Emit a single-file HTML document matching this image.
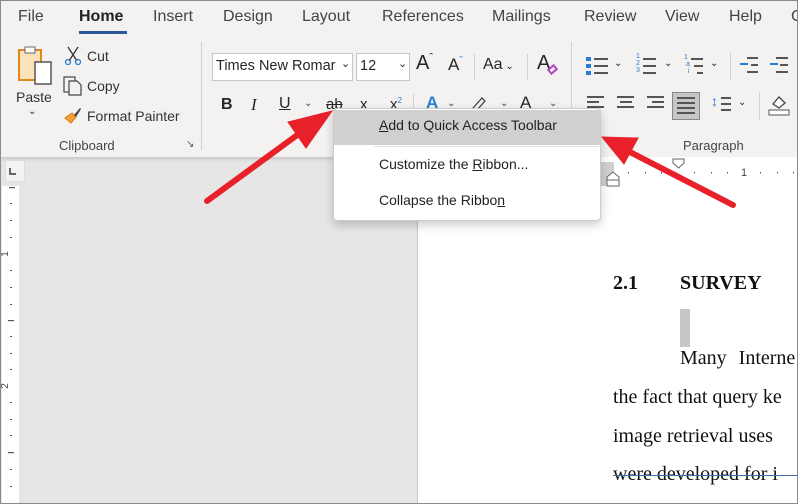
<!DOCTYPE html>
<html><head><style>
*{margin:0;padding:0;box-sizing:border-box}
body{width:798px;height:504px;overflow:hidden;position:relative;background:#e6e6e6;font-family:"Segoe UI","Liberation Sans",sans-serif;color:#262626}
.a{position:absolute;white-space:nowrap}
.tab{position:absolute;top:8px;font-size:16px;color:#444}
.sm{font-size:14px;color:#333}
.box{position:absolute;background:#fff;border:1px solid #c8c6c4}
.ln{position:absolute;background:#555;height:2px}
.bl{position:absolute;background:#2b7cd3}
.doc{font-family:"Liberation Serif",serif;font-size:20px;color:#111}
.ch{position:absolute;font-size:10px;color:#444}
</style></head><body>
<div class="a" style="left:0;top:0;width:798px;height:157px;background:#f3f2f1;box-shadow:0 2px 4px rgba(0,0,0,.15)"></div>
<div class="tab" style="left:18px">File</div>
<div class="tab" style="left:79px;color:#222;font-weight:bold">Home</div>
<div class="a" style="left:79px;top:31px;width:48px;height:3px;background:#2b579a"></div>
<div class="tab" style="left:153px">Insert</div>
<div class="tab" style="left:223px">Design</div>
<div class="tab" style="left:302px">Layout</div>
<div class="tab" style="left:382px">References</div>
<div class="tab" style="left:492px">Mailings</div>
<div class="tab" style="left:584px">Review</div>
<div class="tab" style="left:665px">View</div>
<div class="tab" style="left:729px">Help</div>
<div class="tab" style="left:791px">C</div>
<!-- clipboard -->
<svg class="a" style="left:16px;top:45px" width="40" height="42"><rect x="3" y="5" width="22" height="30" fill="#fbe2b8" stroke="#e08a1e" stroke-width="2"/><rect x="9" y="2" width="10" height="6" fill="#fff" stroke="#666"/><rect x="19" y="17" width="16" height="22" fill="#fff" stroke="#555" stroke-width="1.5"/></svg>
<div class="a sm" style="left:16px;top:89px">Paste</div>
<div class="a" style="left:28px;top:106px;font-size:10px">⌄</div>
<svg class="a" style="left:64px;top:46px" width="18" height="20"><path d="M4 1L13 15M14 1L5 15" stroke="#333" stroke-width="1.3" fill="none"/><circle cx="4" cy="16" r="2.5" fill="none" stroke="#2b7cd3" stroke-width="1.3"/><circle cx="14" cy="16" r="2.5" fill="none" stroke="#2b7cd3" stroke-width="1.3"/></svg>
<div class="a sm" style="left:87px;top:48px">Cut</div>
<svg class="a" style="left:63px;top:76px" width="20" height="20"><rect x="1" y="1" width="11" height="15" fill="none" stroke="#444" stroke-width="1.2"/><path d="M6 5h8l4 4v10H6z" fill="#f3f2f1" stroke="#444" stroke-width="1.2"/></svg>
<div class="a sm" style="left:87px;top:78px">Copy</div>
<svg class="a" style="left:63px;top:106px" width="20" height="18"><path d="M2 12l7-5 4 4-5 6z" fill="#f4a13a" stroke="#e07b12"/><path d="M11 9l6-7 1 1-5 8z" fill="#444"/></svg>
<div class="a sm" style="left:87px;top:108px">Format Painter</div>
<div class="a" style="left:59px;top:138px;font-size:13px;color:#444">Clipboard</div>
<div class="a" style="left:186px;top:139px;font-size:10px;color:#555">↘</div>
<div class="a" style="left:201px;top:42px;width:1px;height:108px;background:#d2d0ce"></div>
<!-- font -->
<div class="box" style="left:212px;top:53px;width:141px;height:28px"></div>
<div class="a" style="left:216px;top:58px;font-size:14.5px">Times New Romar</div>
<div class="a" style="left:341px;top:57px;font-size:11px">⌄</div>
<div class="box" style="left:356px;top:53px;width:54px;height:28px"></div>
<div class="a" style="left:360px;top:58px;font-size:14.5px">12</div>
<div class="a" style="left:398px;top:57px;font-size:11px">⌄</div>
<div class="a" style="left:416px;top:52px;font-size:20px">A<span style="font-size:11px;vertical-align:top">ˆ</span></div>
<div class="a" style="left:448px;top:55px;font-size:17px">A<span style="font-size:11px;color:#2b7cd3;vertical-align:top">ˇ</span></div>
<div class="a" style="left:474px;top:54px;width:1px;height:26px;background:#d2d0ce"></div>
<div class="a" style="left:483px;top:56px;font-size:16px">Aa<span style="font-size:10px"> ⌄</span></div>
<div class="a" style="left:527px;top:54px;width:1px;height:26px;background:#d2d0ce"></div>
<div class="a" style="left:537px;top:52px;font-size:20px">A</div>
<div class="a" style="left:548px;top:66px;width:9px;height:7px;border:2px solid #b146c2;transform:rotate(-40deg)"></div>
<div class="a" style="left:221px;top:96px;font-size:16px;font-weight:bold">B</div>
<div class="a" style="left:251px;top:95px;font-size:17px;font-style:italic;font-family:'Liberation Serif',serif">I</div>
<div class="a" style="left:279px;top:95px;font-size:16px;text-decoration:underline">U</div>
<div class="ch" style="left:304px;top:98px">⌄</div>
<div class="a" style="left:326px;top:96px;font-size:15px;text-decoration:line-through">ab</div>
<div class="a" style="left:360px;top:96px;font-size:15px">x</div>
<div class="a" style="left:390px;top:96px;font-size:15px">x<sup style="font-size:8px;color:#2b7cd3">2</sup></div>
<div class="a" style="left:413px;top:94px;width:1px;height:22px;background:#d2d0ce"></div>
<div class="a" style="left:426px;top:93px;font-size:17px;color:#2b7cd3;font-weight:bold">A</div>
<div class="ch" style="left:447px;top:98px">⌄</div>
<svg class="a" style="left:470px;top:94px" width="18" height="18"><path d="M3 14l9-10 3 3-9 10z" fill="none" stroke="#444" stroke-width="1.3"/></svg>
<div class="ch" style="left:500px;top:98px">⌄</div>
<div class="a" style="left:520px;top:93px;font-size:17px">A</div>
<div class="ch" style="left:549px;top:98px">⌄</div>
<!-- paragraph -->
<div class="a" style="left:571px;top:42px;width:1px;height:108px;background:#d2d0ce"></div>
<div class="bl" style="left:586px;top:57px;width:5px;height:4px"></div><div class="ln" style="left:594px;top:58px;width:14px;height:1.5px"></div>
<div class="bl" style="left:586px;top:64px;width:5px;height:4px"></div><div class="ln" style="left:594px;top:65px;width:14px;height:1.5px"></div>
<div class="bl" style="left:586px;top:71px;width:5px;height:4px"></div><div class="ln" style="left:594px;top:72px;width:14px;height:1.5px"></div>
<div class="a" style="left:614px;top:58px;font-size:10px">⌄</div>
<div class="a" style="left:636px;top:53px;font-size:7px;color:#2b7cd3;line-height:7px">1<br>2<br>3</div><div class="ln" style="left:643px;top:58px;width:13px;height:1.5px"></div><div class="ln" style="left:643px;top:65px;width:13px;height:1.5px"></div><div class="ln" style="left:643px;top:72px;width:13px;height:1.5px"></div>
<div class="a" style="left:664px;top:58px;font-size:10px">⌄</div>
<div class="a" style="left:684px;top:54px;font-size:7px;color:#2b7cd3;line-height:7px">1<br>&nbsp;a<br>&nbsp;&nbsp;i</div><div class="ln" style="left:691px;top:58px;width:12px;height:1.5px"></div><div class="ln" style="left:694px;top:65px;width:9px;height:1.5px"></div><div class="ln" style="left:697px;top:72px;width:6px;height:1.5px"></div>
<div class="a" style="left:710px;top:58px;font-size:10px">⌄</div>
<div class="a" style="left:730px;top:52px;width:1px;height:28px;background:#d2d0ce"></div>
<div class="bl" style="left:740px;top:63px;width:8px;height:1.5px"></div><div class="ln" style="left:747px;top:57px;width:11px;height:1.5px"></div><div class="ln" style="left:751px;top:64px;width:7px;height:1.5px"></div><div class="ln" style="left:747px;top:71px;width:11px;height:1.5px"></div>
<div class="bl" style="left:770px;top:63px;width:8px;height:1.5px"></div><div class="ln" style="left:776px;top:57px;width:12px;height:1.5px"></div><div class="ln" style="left:780px;top:64px;width:8px;height:1.5px"></div><div class="ln" style="left:776px;top:71px;width:12px;height:1.5px"></div>
<div class="ln" style="left:587px;top:96px;width:17px;height:1.5px"></div><div class="ln" style="left:587px;top:101px;width:12px;height:1.5px"></div><div class="ln" style="left:587px;top:106px;width:17px;height:1.5px"></div>
<div class="ln" style="left:617px;top:96px;width:17px;height:1.5px"></div><div class="ln" style="left:620px;top:101px;width:12px;height:1.5px"></div><div class="ln" style="left:617px;top:106px;width:17px;height:1.5px"></div>
<div class="ln" style="left:647px;top:96px;width:17px;height:1.5px"></div><div class="ln" style="left:652px;top:101px;width:12px;height:1.5px"></div><div class="ln" style="left:647px;top:106px;width:17px;height:1.5px"></div>
<div class="a" style="left:672px;top:92px;width:28px;height:28px;background:#c8c6c4;border:1px solid #8a8886"></div>
<div class="ln" style="left:677px;top:97px;width:18px;height:1.5px"></div><div class="ln" style="left:677px;top:102px;width:18px;height:1.5px"></div><div class="ln" style="left:677px;top:107px;width:18px;height:1.5px"></div><div class="ln" style="left:677px;top:112px;width:18px;height:1.5px"></div>
<div class="a" style="left:711px;top:93px;font-size:14px;color:#2b7cd3">↕</div><div class="ln" style="left:721px;top:97px;width:10px;height:1.5px"></div><div class="ln" style="left:721px;top:103px;width:10px;height:1.5px"></div><div class="ln" style="left:721px;top:109px;width:10px;height:1.5px"></div>
<div class="a" style="left:738px;top:97px;font-size:10px">⌄</div>
<div class="a" style="left:759px;top:92px;width:1px;height:28px;background:#d2d0ce"></div>
<svg class="a" style="left:768px;top:93px" width="22" height="24"><path d="M5 11l6-7 6 6-6 5z" fill="#fff" stroke="#444" stroke-width="1.3"/><rect x="1" y="17" width="20" height="5" fill="#fff" stroke="#555"/></svg>
<div class="a" style="left:683px;top:138px;font-size:13px;color:#444">Paragraph</div>
<!-- left ruler area -->
<div class="a" style="left:5px;top:160px;width:20px;height:22px;background:#f3f3f3;border:1px solid #ddd"></div>
<div class="a" style="left:9px;top:168px;width:7px;height:7px;border-left:2px solid #666;border-bottom:2px solid #666"></div>
<svg class="a" style="left:0;top:186px" width="20" height="318"><rect x="2" y="0" width="17" height="318" fill="#fff"/>
<g fill="#555"><rect x="9" y="1" width="6" height="1.2"/><rect x="10" y="17" width="2" height="1"/><rect x="10" y="34" width="2" height="1"/><rect x="10" y="51" width="2" height="1"/><rect x="10" y="84" width="2" height="1"/><rect x="10" y="101" width="2" height="1"/><rect x="10" y="118" width="2" height="1"/><rect x="8" y="134" width="6" height="1.2"/><rect x="10" y="150" width="2" height="1"/><rect x="10" y="167" width="2" height="1"/><rect x="10" y="183" width="2" height="1"/><rect x="10" y="216" width="2" height="1"/><rect x="10" y="233" width="2" height="1"/><rect x="10" y="249" width="2" height="1"/><rect x="8" y="266" width="6" height="1.2"/><rect x="10" y="283" width="2" height="1"/><rect x="10" y="300" width="2" height="1"/></g>
<text x="0" y="0" font-size="10" fill="#444" transform="translate(8,68) rotate(-90)" text-anchor="middle" font-family="Liberation Sans">1</text>
<text x="0" y="0" font-size="10" fill="#444" transform="translate(8,200) rotate(-90)" text-anchor="middle" font-family="Liberation Sans">2</text></svg>
<!-- document -->
<div class="a" style="left:417px;top:157px;width:381px;height:347px;background:#fff;border-left:1px solid #c8c8c8"></div>
<div class="a" style="left:600px;top:162px;width:198px;height:24px;background:#fff"></div>
<div class="a" style="left:600px;top:162px;width:14px;height:24px;background:#d0d0d0"></div>
<svg class="a" style="left:600px;top:162px" width="198" height="24"><g fill="#555"><rect x="28" y="10" width="1" height="1.5"/><rect x="45" y="10" width="1" height="1.5"/><rect x="61" y="10" width="1" height="1.5"/><rect x="94" y="10" width="1" height="1.5"/><rect x="111" y="10" width="1" height="1.5"/><rect x="127" y="10" width="1" height="1.5"/><rect x="160" y="10" width="1" height="1.5"/><rect x="177" y="10" width="1" height="1.5"/><rect x="193" y="10" width="1" height="1.5"/></g><text x="144" y="14" font-size="11" fill="#444" text-anchor="middle" font-family="Liberation Sans">1</text></svg>
<svg class="a" style="left:672px;top:158px" width="14" height="14"><path d="M1 1h11v4l-5.5 5L1 5z" fill="#fff" stroke="#666"/></svg>
<svg class="a" style="left:606px;top:171px" width="14" height="16"><path d="M1 6l6-5 6 5v9H1z" fill="#fff" stroke="#666"/><path d="M1 9h12" stroke="#666"/></svg>
<div class="a doc" style="left:613px;top:272px;font-weight:bold">2.1</div>
<div class="a doc" style="left:680px;top:272px;font-weight:bold">SURVEY</div>
<div class="a" style="left:680px;top:309px;width:10px;height:38px;background:#c6c6c6"></div>
<div class="a doc" style="left:680px;top:347px;word-spacing:7px">Many Interne</div>
<div class="a doc" style="left:613px;top:386px">the fact that query ke</div>
<div class="a doc" style="left:613px;top:425px">image retrieval uses</div>
<div class="a doc" style="left:613px;top:463px">were developed for i</div>
<div class="a" style="left:613px;top:475px;width:185px;height:1px;background:#3c6fa8"></div>
<!-- context menu -->
<div class="a" style="left:333px;top:108px;width:268px;height:113px;background:#fff;border:1px solid #ccc;border-radius:4px;box-shadow:0 4px 10px rgba(0,0,0,.2)"></div>
<div class="a" style="left:334px;top:110px;width:266px;height:35px;background:#d2d0ce"></div>
<div class="a" style="left:374px;top:146px;width:225px;height:1px;background:#e1dfdd"></div>
<div class="a" style="left:379px;top:117px;font-size:14px;color:#222"><u>A</u>dd to Quick Access Toolbar</div>
<div class="a" style="left:379px;top:156px;font-size:14px;color:#222">Customize the <u>R</u>ibbon...</div>
<div class="a" style="left:379px;top:192px;font-size:14px;color:#222">Collapse the Ribbo<u>n</u></div>
<!-- arrows -->
<svg class="a" style="left:0;top:0" width="798" height="504"><g stroke="#e8202a" stroke-width="6" stroke-linecap="round" fill="#e8202a">
<line x1="207" y1="201" x2="300" y2="133"/><path d="M332 111L288 122L306 148Z" stroke-width="1"/>
<line x1="733" y1="205" x2="630" y2="152"/><path d="M602 137L624 164L638 138Z" stroke-width="1"/></g></svg>
<div class="a" style="left:0;top:0;width:798px;height:504px;border:1px solid #8a8a8a"></div>
</body></html>
